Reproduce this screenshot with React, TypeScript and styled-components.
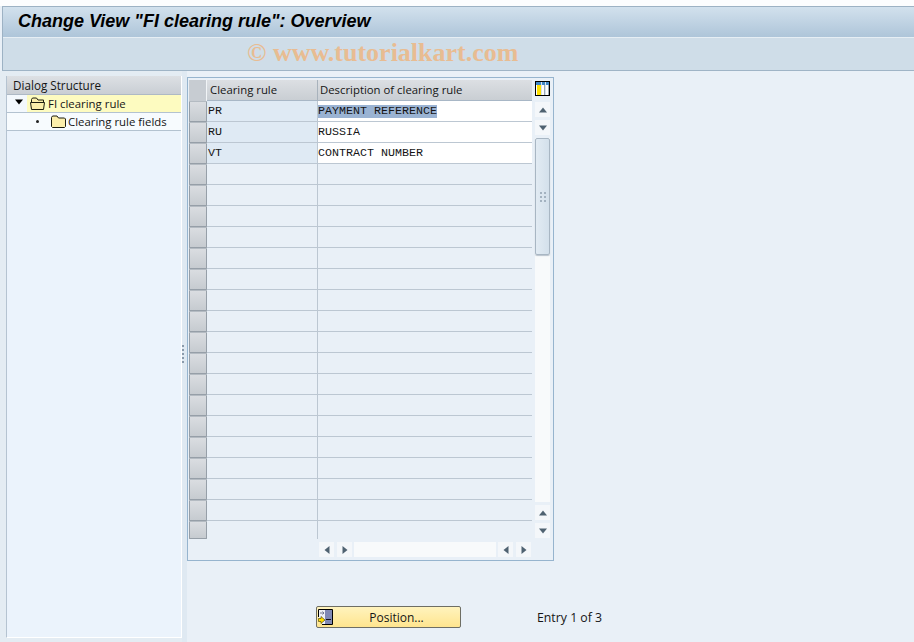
import React from 'react'
import styled, {createGlobalStyle} from 'styled-components'

const GlobalStyle = createGlobalStyle`
  html, body {
    margin: 0;
    padding: 0;
    background: #e9f0f7;
  }
  * {
    box-sizing: border-box;
  }
`

const rows = [
  {code: 'PR', text: 'PAYMENT REFERENCE', picked: true},
  {code: 'RU', text: 'RUSSIA', picked: false},
  {code: 'VT', text: 'CONTRACT NUMBER', picked: false},
  ...Array.from({length: 18}, () => ({code: '', text: '', picked: false})),
]

const Triangle: React.FC<{dir: 'up' | 'down' | 'left' | 'right'; fill?: string}> = ({dir, fill = '#4f6271'}) => {
  const points = {
    up: '1,7.5 5,2.5 9,7.5',
    down: '1,2.5 9,2.5 5,7.5',
    left: '7.5,1 7.5,9 2.5,5',
    right: '2.5,1 2.5,9 7.5,5',
  }[dir]
  return (
    <svg width="10" height="10" viewBox="0 0 10 10">
      <polygon points={points} fill={fill} />
    </svg>
  )
}

const FolderClosed = () => (
  <svg width="15" height="13" viewBox="0 0 15 13">
    <path d="M0.5 11.5V2.5L1.5 1H6L7.5 3H13.5L14.5 4V11.5L13.5 12.5H1.5Z" fill="#fbeeaa" stroke="#1d1d10" />
  </svg>
)

const FolderOpen = () => (
  <svg width="16" height="13" viewBox="0 0 16 13">
    <path d="M1.5 11.5V2.5L2.5 1H6.5L8 3H13.5V5" fill="#fbeeaa" stroke="#1d1d10" />
    <path d="M1.5 12.5L0.5 5.5H14.5L13.5 12.5Z" fill="#fbeeaa" stroke="#1d1d10" />
  </svg>
)

const ColumnsIcon = () => (
  <svg width="15" height="15" viewBox="0 0 15 15">
    <rect x="0.5" y="0.5" width="14" height="14" fill="#fff" stroke="#000" />
    <rect x="1" y="1" width="13" height="3" fill="#3f86c6" />
    <rect x="2" y="4" width="4" height="10" fill="#ffe100" />
    <rect x="6" y="1" width="1" height="13" fill="#d7e4ee" />
    <rect x="9" y="4" width="1" height="10" fill="#9aa8b4" />
    <rect x="10" y="1" width="1" height="13" fill="#d7e4ee" />
    <rect x="13" y="4" width="1" height="10" fill="#9aa8b4" />
  </svg>
)

const PositionIcon = () => (
  <svg width="15" height="16" viewBox="0 0 15 16">
    <path d="M0.5 8V0.5H14.5V15.5H4" fill="#eef1f6" stroke="#000" />
    <rect x="7" y="1" width="7" height="14" fill="#8089b5" />
    <path d="M2 4H6M4.5 2.5L6 4L4.5 5.5" fill="none" stroke="#6f7690" />
    <path d="M8 10.5H13" stroke="#15151f" />
    <path d="M0.5 9.5H3V7.5L7 11L3 14.5V12.5H0.5Z" fill="#ffdd00" stroke="#3a3000" strokeWidth="0.6" />
  </svg>
)

const App: React.FC = () => {
  return (
    <Root>
      <GlobalStyle />
      <TopStrip />
      <Header>
        <TitleBar>
          <Title>Change View &quot;FI clearing rule&quot;: Overview</Title>
        </TitleBar>
        <ToolBar>
          <Watermark>© www.tutorialkart.com</Watermark>
        </ToolBar>
      </Header>
      <Body>
        <Tree>
          <TreeHead>Dialog Structure</TreeHead>
          <TreeRow $selected>
            <Arrow><Triangle dir="down" fill="#000" /></Arrow>
            <FolderOpen />
            <TreeLabel>FI clearing rule</TreeLabel>
          </TreeRow>
          <TreeRow>
            <Bullet />
            <FolderClosed />
            <TreeLabel>Clearing rule fields</TreeLabel>
          </TreeRow>
        </Tree>
        <Splitter>
          <Grip />
        </Splitter>
        <Main>
          <TableBox>
            <TableArea>
              <Table>
                <HeadRow>
                  <Corner />
                  <HeadCell $width={111}>Clearing rule</HeadCell>
                  <HeadCell $width={214}>Description of clearing rule</HeadCell>
                </HeadRow>
                {rows.map((row, i) => (
                  <Row key={i} $last={i === rows.length - 1}>
                    <Selector />
                    <CodeCell $filled={i < 3}>{row.code}</CodeCell>
                    <TextCell $filled={i < 3}>
                      {row.picked ? <Picked>{row.text}</Picked> : row.text}
                    </TextCell>
                  </Row>
                ))}
              </Table>
              <VScroll>
                <ColumnButton><ColumnsIcon /></ColumnButton>
                <ScrollButton><Triangle dir="up" /></ScrollButton>
                <ScrollButton><Triangle dir="down" /></ScrollButton>
                <Track>
                  <Thumb>
                    <ThumbGrip />
                  </Thumb>
                </Track>
                <ScrollButton><Triangle dir="up" /></ScrollButton>
                <ScrollButton><Triangle dir="down" /></ScrollButton>
              </VScroll>
            </TableArea>
            <HScroll>
              <ScrollButton><Triangle dir="left" /></ScrollButton>
              <ScrollButton><Triangle dir="right" /></ScrollButton>
              <HTrack />
              <ScrollButton><Triangle dir="left" /></ScrollButton>
              <ScrollButton><Triangle dir="right" /></ScrollButton>
            </HScroll>
          </TableBox>
          <Footer>
            <PositionButton>
              <PositionIcon />
              <ButtonLabel>Position...</ButtonLabel>
            </PositionButton>
            <EntryText>Entry 1 of 3</EntryText>
          </Footer>
        </Main>
      </Body>
    </Root>
  )
}

export default App

const uiFont = `"Open Sans", "Liberation Sans", Arial, sans-serif`
const monoFont = `"Liberation Mono", "Courier New", monospace`

const Root = styled('div')`
  width: 914px;
  height: 642px;
  overflow: hidden;
  display: flex;
  flex-direction: column;
  background: #e9f0f7;
  font-family: ${uiFont};
  color: #151515;
`

const TopStrip = styled('div')`
  height: 6px;
  background: #fcfdfe;
`

const Header = styled('div')`
  height: 65px;
  margin-left: 2px;
  border-left: 1px solid #9db2c4;
  border-top: 1px solid #9db2c4;
  border-bottom: 1px solid #9fb4c6;
`

const TitleBar = styled('div')`
  height: 30px;
  padding: 0 0 2px 15px;
  display: flex;
  align-items: center;
  background: linear-gradient(#d2e1ed, #aec5d9);
`

const Title = styled('div')`
  font-family: "Liberation Sans", Arial, sans-serif;
  font-size: 18px;
  font-weight: bold;
  font-style: italic;
  color: #000;
`

const ToolBar = styled('div')`
  height: 33px;
  border-top: 1px solid #e6eef4;
  background: #cfdde8;
  padding: 0 0 3px 244px;
  display: flex;
  align-items: center;
`

const Watermark = styled('div')`
  font-family: "Liberation Serif", "Times New Roman", serif;
  font-size: 26px;
  font-weight: bold;
  color: #e8bc92;
  white-space: nowrap;
`

const Body = styled('div')`
  flex: 1;
  display: flex;
  min-height: 0;
  background: linear-gradient(90deg, #e4ecf3 0 182px, #e9f0f7 182px);
`

const Tree = styled('div')`
  width: 176px;
  margin: 5px 0 4px 6px;
  background: #ebf3fc;
  border-left: 1px solid #b5c3d1;
  border-right: 1px solid #ffffff;
  border-bottom: 1px solid #ffffff;
`

const TreeHead = styled('div')`
  height: 19px;
  padding-left: 6px;
  display: flex;
  align-items: center;
  font-size: 11.7px;
  background: linear-gradient(#dde0e4, #c9ced4);
  border-bottom: 1px solid #aeb9c5;
`

const TreeRow = styled('div')<{$selected?: boolean}>`
  height: 18px;
  display: flex;
  align-items: center;
  background: ${props => (props.$selected ? 'linear-gradient(90deg, #f3f8fd 0 20px, #fdfbc0 20px)' : '#f7fbfe')};
  border-bottom: 1px solid #b3c2d0;
  padding-left: ${props => (props.$selected ? '6px' : '29px')};
`

const Arrow = styled('span')`
  width: 17px;
  height: 10px;
  padding-left: 1px;
  margin-top: -3px;
  display: flex;
`

const Bullet = styled('span')`
  width: 3px;
  height: 3px;
  margin-right: 12px;
  background: #222;
  border-radius: 50%;
`

const TreeLabel = styled('span')`
  margin-left: 2px;
  font-size: 11.4px;
  white-space: nowrap;
`

const Splitter = styled('div')`
  width: 5px;
  padding-bottom: 5px;
  background: #dfe9f2;
  display: flex;
  align-items: center;
`

const Grip = styled('div')`
  width: 2px;
  height: 18px;
  background: conic-gradient(from 270deg at 2px 2px, #8a9aab 25%, transparent 0);
  background-size: 4px 4px;
`

const Main = styled('div')`
  flex: 1;
  padding-top: 6px;
  display: flex;
  flex-direction: column;
`

const TableBox = styled('div')`
  width: 367px;
  height: 484px;
  border: 1px solid #96b4ce;
  background: #e9f0f7;
  padding: 2px 0 0 1px;
`

const TableArea = styled('div')`
  display: flex;
`

const Table = styled('div')`
  width: 343px;
`

const HeadRow = styled('div')`
  height: 21px;
  display: flex;
`

const Corner = styled('div')`
  width: 18px;
  background: #c7ccd2;
  border-right: 1px solid #f1f4f7;
`

const HeadCell = styled('div')<{$width: number}>`
  width: ${props => props.$width}px;
  padding: 0 0 2px 3px;
  display: flex;
  align-items: center;
  font-size: 11.35px;
  background: linear-gradient(#dcdfe3, #c9ced3);
  border-right: 1px solid #a8b2bc;
  border-bottom: 1px solid #a8b7c6;

  &:last-child {
    padding-left: 2px;
    border-right: 0;
  }
`

const Row = styled('div')<{$last: boolean}>`
  height: ${props => (props.$last ? '18px' : '21px')};
  display: flex;

  & > div:not(:first-child) {
    border-bottom-width: ${props => (props.$last ? '0' : '1px')};
  }
`

const Selector = styled('div')`
  width: 18px;
  background: linear-gradient(#dadde1, #c6cbd0);
  border: 1px solid #969fa8;
  border-top-color: #b4bbc2;
  border-radius: 1px;
`

const CodeCell = styled('div')<{$filled: boolean}>`
  width: 111px;
  padding: 1px 0 0 1px;
  font-family: ${monoFont};
  font-size: 11.67px;
  line-height: 19px;
  background: ${props => (props.$filled ? '#dfeaf4' : 'transparent')};
  border-right: 1px solid #bcc7d2;
  border-bottom: 1px solid #bcc7d2;
`

const TextCell = styled('div')<{$filled: boolean}>`
  width: 214px;
  padding-top: 1px;
  font-family: ${monoFont};
  font-size: 11.67px;
  line-height: 19px;
  white-space: pre;
  background: ${props => (props.$filled ? '#ffffff' : 'transparent')};
  border-bottom: 1px solid #bcc7d2;
`

const Picked = styled('span')`
  display: inline-block;
  height: 13px;
  margin-top: 3px;
  line-height: 13px;
  vertical-align: top;
  background: #9ab3d3;
`

const VScroll = styled('div')`
  width: 20px;
  padding-left: 3px;
  display: flex;
  flex-direction: column;
  gap: 3px;
`

const ColumnButton = styled('div')`
  height: 19px;
  padding-top: 1px;
  display: flex;
`

const ScrollButton = styled('div')`
  width: 15px;
  height: 15px;
  background: #f4f7fa;
  display: flex;
  align-items: center;
  justify-content: center;
  flex: none;
`

const Track = styled('div')`
  width: 15px;
  height: 364px;
  background: #f8fafb;
`

const Thumb = styled('div')`
  width: 15px;
  height: 117px;
  background: linear-gradient(90deg, #e2ebf3, #d3e0eb);
  border: 1px solid #a8b6c3;
  border-radius: 2px;
  box-shadow: 0 1px 1px #b9c3cc;
  display: flex;
  align-items: center;
  justify-content: center;
`

const ThumbGrip = styled('div')`
  width: 6px;
  height: 10px;
  background: conic-gradient(from 270deg at 2px 2px, #a3b2c0 25%, transparent 0);
  background-size: 4px 4px;
`

const HScroll = styled('div')`
  display: flex;
  gap: 3px;
  margin: 3px 0 0 130px;
`

const HTrack = styled('div')`
  width: 142px;
  height: 15px;
  margin: 0 -1px;
  background: #f8fafb;
`

const Footer = styled('div')`
  display: flex;
  align-items: center;
  margin-top: 45px;
  padding-left: 129px;
`

const PositionButton = styled('div')`
  width: 145px;
  height: 22px;
  display: flex;
  align-items: center;
  padding-left: 1px;
  background: linear-gradient(#fff3bd, #ffe58f);
  border: 1px solid #6e6e64;
  border-radius: 2px;
`

const ButtonLabel = styled('span')`
  flex: 1;
  text-align: center;
  font-size: 12px;
`

const EntryText = styled('div')`
  margin-left: 76px;
  font-size: 12.3px;
`
